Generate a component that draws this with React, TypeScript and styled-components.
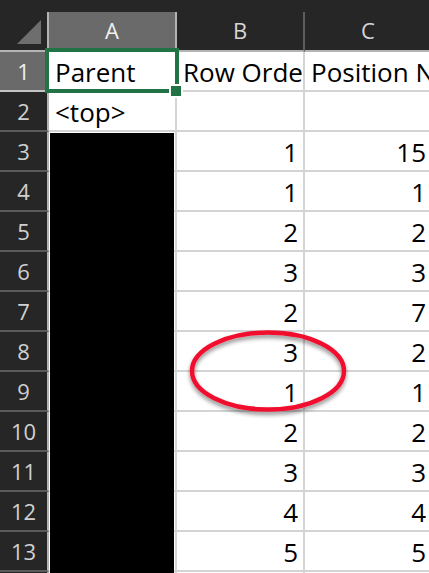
import styled, { createGlobalStyle } from 'styled-components';

const GlobalStyle = createGlobalStyle`
  html, body {
    margin: 0;
    padding: 0;
    background: #ffffff;
  }
  body {
    font-family: "Open Sans", "Liberation Sans", sans-serif;
    overflow: hidden;
  }
`;

interface RowData {
  a: string;
  b: string;
  c: string;
}

// column A below row 2 is blacked out in the screenshot
const rows: RowData[] = [
  { a: 'Parent', b: 'Row Order', c: 'Position Number' },
  { a: '<top>', b: '', c: '' },
  { a: '', b: '1', c: '15' },
  { a: '', b: '1', c: '1' },
  { a: '', b: '2', c: '2' },
  { a: '', b: '3', c: '3' },
  { a: '', b: '2', c: '7' },
  { a: '', b: '3', c: '2' },
  { a: '', b: '1', c: '1' },
  { a: '', b: '2', c: '2' },
  { a: '', b: '3', c: '3' },
  { a: '', b: '4', c: '4' },
  { a: '', b: '5', c: '5' },
  { a: '', b: '', c: '' },
];

const columns = ['A', 'B', 'C'];

export default function App() {
  return (
    <>
      <GlobalStyle />
      <Sheet>
        <TopStrip />
        <Grid>
          <Corner>
            <CornerTriangle />
          </Corner>
          {columns.map((col, i) => (
            <ColumnHeader key={col} selected={i === 0}>
              {col}
            </ColumnHeader>
          ))}
          {rows.map((row, i) => (
            <Row key={i} row={row} index={i + 1} />
          ))}
        </Grid>

        <Redaction />
        <Selection>
          <FillHandle />
        </Selection>
        <Highlight viewBox="0 0 180 100" width={180} height={100}>
          <defs>
            <filter id="shadow" x="-20%" y="-30%" width="140%" height="170%">
              <feDropShadow dx="0" dy="3" stdDeviation="2.2" floodColor="#000" floodOpacity="0.45" />
            </filter>
          </defs>
          <ellipse
            cx={90}
            cy={48}
            rx={76}
            ry={38.5}
            fill="none"
            stroke="#f0102e"
            strokeWidth={4.5}
            filter="url(#shadow)"
          />
        </Highlight>
      </Sheet>
    </>
  );
}

function Row({ row, index }: { row: RowData; index: number }) {
  const selected = index === 1;
  const isText = index <= 2;
  return (
    <>
      <RowHeader selected={selected}>{index}</RowHeader>
      <Cell align="left">{row.a}</Cell>
      <Cell align={isText ? 'left' : 'right'}>{row.b}</Cell>
      <Cell align={isText ? 'left' : 'right'}>{row.c}</Cell>
    </>
  );
}

const Sheet = styled.div`
  position: relative;
  width: 429px;
  height: 573px;
  overflow: hidden;
  background: #ffffff;
`;

const TopStrip = styled.div`
  height: 12px;
  background: #262626;
`;

const Grid = styled.div`
  display: grid;
  grid-template-columns: 49px 128px 128px 128px;
  grid-auto-rows: 40px;
  width: 433px;
`;

const Corner = styled.div`
  display: flex;
  align-items: flex-end;
  justify-content: flex-end;
  padding: 0 6px 6px 0;
  box-sizing: border-box;
  background: #262626;
  border-right: 2px solid #b4b4b4;
  border-bottom: 2px solid #b4b4b4;
`;

const CornerTriangle = styled.div`
  width: 0;
  height: 0;
  border-left: 24px solid transparent;
  border-bottom: 24px solid #6e6e6e;
`;

const ColumnHeader = styled.div<{ selected: boolean }>`
  background: ${props => (props.selected ? '#6a6a6a' : '#262626')};
  color: ${props => (props.selected ? '#f0f0f0' : '#d6d6d6')};
  border-right: 2px solid ${props => (props.selected ? '#b4b4b4' : '#5c5c5c')};
  border-bottom: 2px solid #b4b4b4;
  font-size: 22px;
  line-height: 22px;
  padding-top: 7px;
  text-align: center;
  box-sizing: border-box;
`;

const RowHeader = styled.div<{ selected: boolean }>`
  background: ${props => (props.selected ? '#6a6a6a' : '#262626')};
  color: ${props => (props.selected ? '#f0f0f0' : '#d0d0d0')};
  border-right: 2px solid #b4b4b4;
  border-bottom: 2px solid ${props => (props.selected ? '#c4c4c4' : '#5a5a5a')};
  font-size: 22px;
  line-height: 22px;
  padding-top: 8px;
  text-align: center;
  box-sizing: border-box;
`;

const Cell = styled.div<{ align: 'left' | 'right' }>`
  border-right: 2px solid #d4d4d4;
  border-bottom: 2px solid #d4d4d4;
  box-sizing: border-box;
  padding: 7px 5px 0 6px;
  font-size: 26px;
  line-height: 26px;
  color: #000000;
  text-align: ${props => props.align};
  white-space: nowrap;
  overflow: hidden;
  text-overflow: clip;
`;

const Redaction = styled.div`
  position: absolute;
  left: 50px;
  top: 133px;
  width: 124px;
  height: 440px;
  background: #000000;
`;

const Selection = styled.div`
  position: absolute;
  left: 45px;
  top: 48px;
  width: 134px;
  height: 45px;
  box-sizing: border-box;
  border: 4px solid #217346;
`;

const FillHandle = styled.div`
  position: absolute;
  left: 122px;
  top: 34px;
  width: 10px;
  height: 10px;
  background: #217346;
  outline: 2px solid #ffffff;
`;

const Highlight = styled.svg`
  position: absolute;
  left: 178px;
  top: 323px;
  overflow: visible;
`;
